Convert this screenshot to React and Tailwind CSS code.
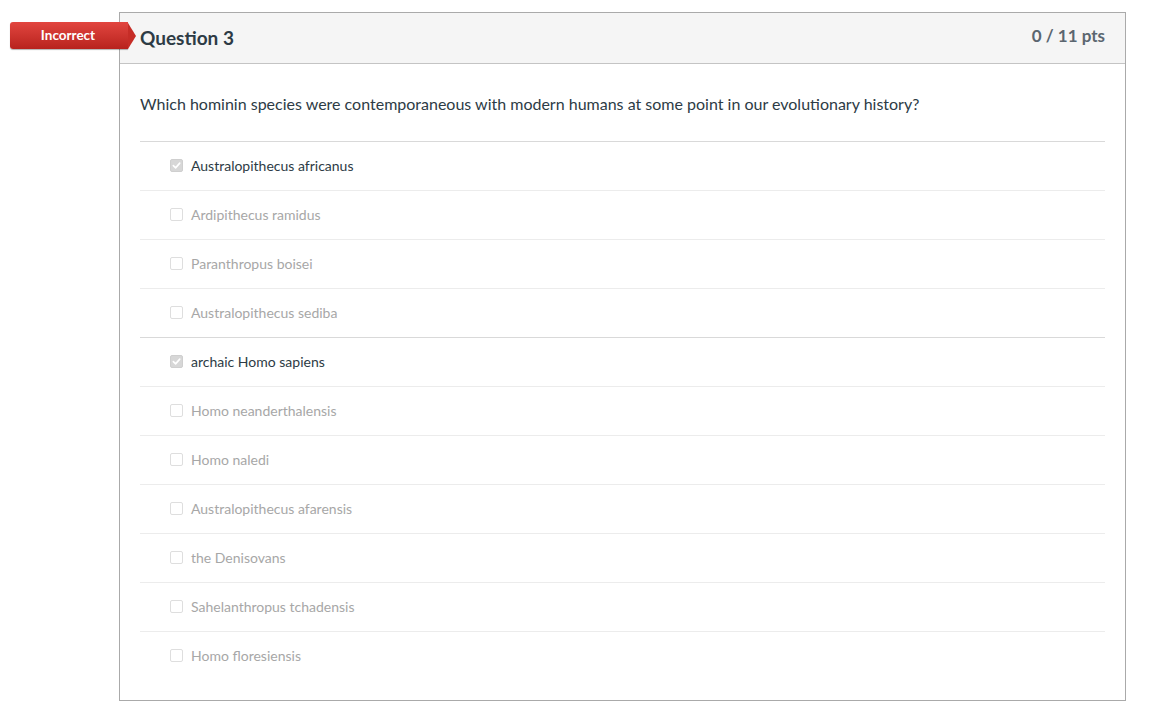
import React from 'react';

const answers = [
  { text: 'Australopithecus africanus', picked: true },
  { text: 'Ardipithecus ramidus' },
  { text: 'Paranthropus boisei' },
  { text: 'Australopithecus sediba' },
  { text: 'archaic Homo sapiens', picked: true },
  { text: 'Homo neanderthalensis' },
  { text: 'Homo naledi' },
  { text: 'Australopithecus afarensis' },
  { text: 'the Denisovans' },
  { text: 'Sahelanthropus tchadensis' },
  { text: 'Homo floresiensis' },
];

function Box({ checked }) {
  if (checked) {
    return (
      <span className="w-[13px] h-[13px] rounded-[2px] bg-[#d7d7d7] border border-[#cfcfcf] flex items-center justify-center shrink-0">
        <svg width="9" height="9" viewBox="0 0 10 10" fill="none">
          <path d="M1.5 5.2 L4 7.6 L8.6 2.4" stroke="#ffffff" strokeWidth="1.8" strokeLinecap="round" strokeLinejoin="round" />
        </svg>
      </span>
    );
  }
  return <span className="w-[13px] h-[13px] rounded-[2px] bg-white border border-[#dedede] shrink-0" />;
}

export default function App() {
  return (
    <div className="bg-white min-h-[716px] pt-3 font-['Lato','Liberation_Sans',sans-serif] text-[#2d3b45]">
      <div className="relative ml-[119px] w-[1007px] border border-[#aaaaaa]">
        {/* Incorrect badge */}
        <div className="absolute left-[-110px] top-[9px] flex items-center">
          <div className="h-[27px] w-[118px] rounded-l-[3px] bg-gradient-to-b from-[#e2453f] to-[#b8221d] shadow-[0_1px_1px_rgba(0,0,0,0.3)] flex items-center justify-center pr-[2px] text-white text-[13.5px] font-bold">
            Incorrect
          </div>
          <div className="w-0 h-0 border-y-[13.5px] border-y-transparent border-l-[8px] border-l-[#c62d27]" />
        </div>

        {/* Header */}
        <div className="h-[51px] bg-[#f5f5f5] border-b border-[#c4c4c4] flex items-start justify-between pl-5 pr-5">
          <div className="pt-[11px] text-[19px] font-bold text-[#2d3b45]">Question 3</div>
          <div className="pt-[10px] text-[17px] font-bold text-[#5b6670]">0 / 11 pts</div>
        </div>

        {/* Body */}
        <div className="px-5 pt-[30px] pb-[20px]">
          <p className="text-[16px] leading-[20px] text-[#2d3b45] mb-[27px]">
            Which hominin species were contemporaneous with modern humans at some point in our evolutionary history?
          </p>
          <div>
            {answers.map((a, i) => (
              <div
                key={i}
                className={`h-[49px] flex items-center pl-[30px] pb-[2px] gap-[8px] border-t ${
                  a.picked ? 'border-[#d9d9d9]' : 'border-[#ececec]'
                }`}
              >
                <Box checked={a.picked} />
                <span className={`text-[14px] ${a.picked ? 'text-[#2d3b45]' : 'text-[#a7a7a7]'}`}>{a.text}</span>
              </div>
            ))}
          </div>
        </div>
      </div>
    </div>
  );
}
